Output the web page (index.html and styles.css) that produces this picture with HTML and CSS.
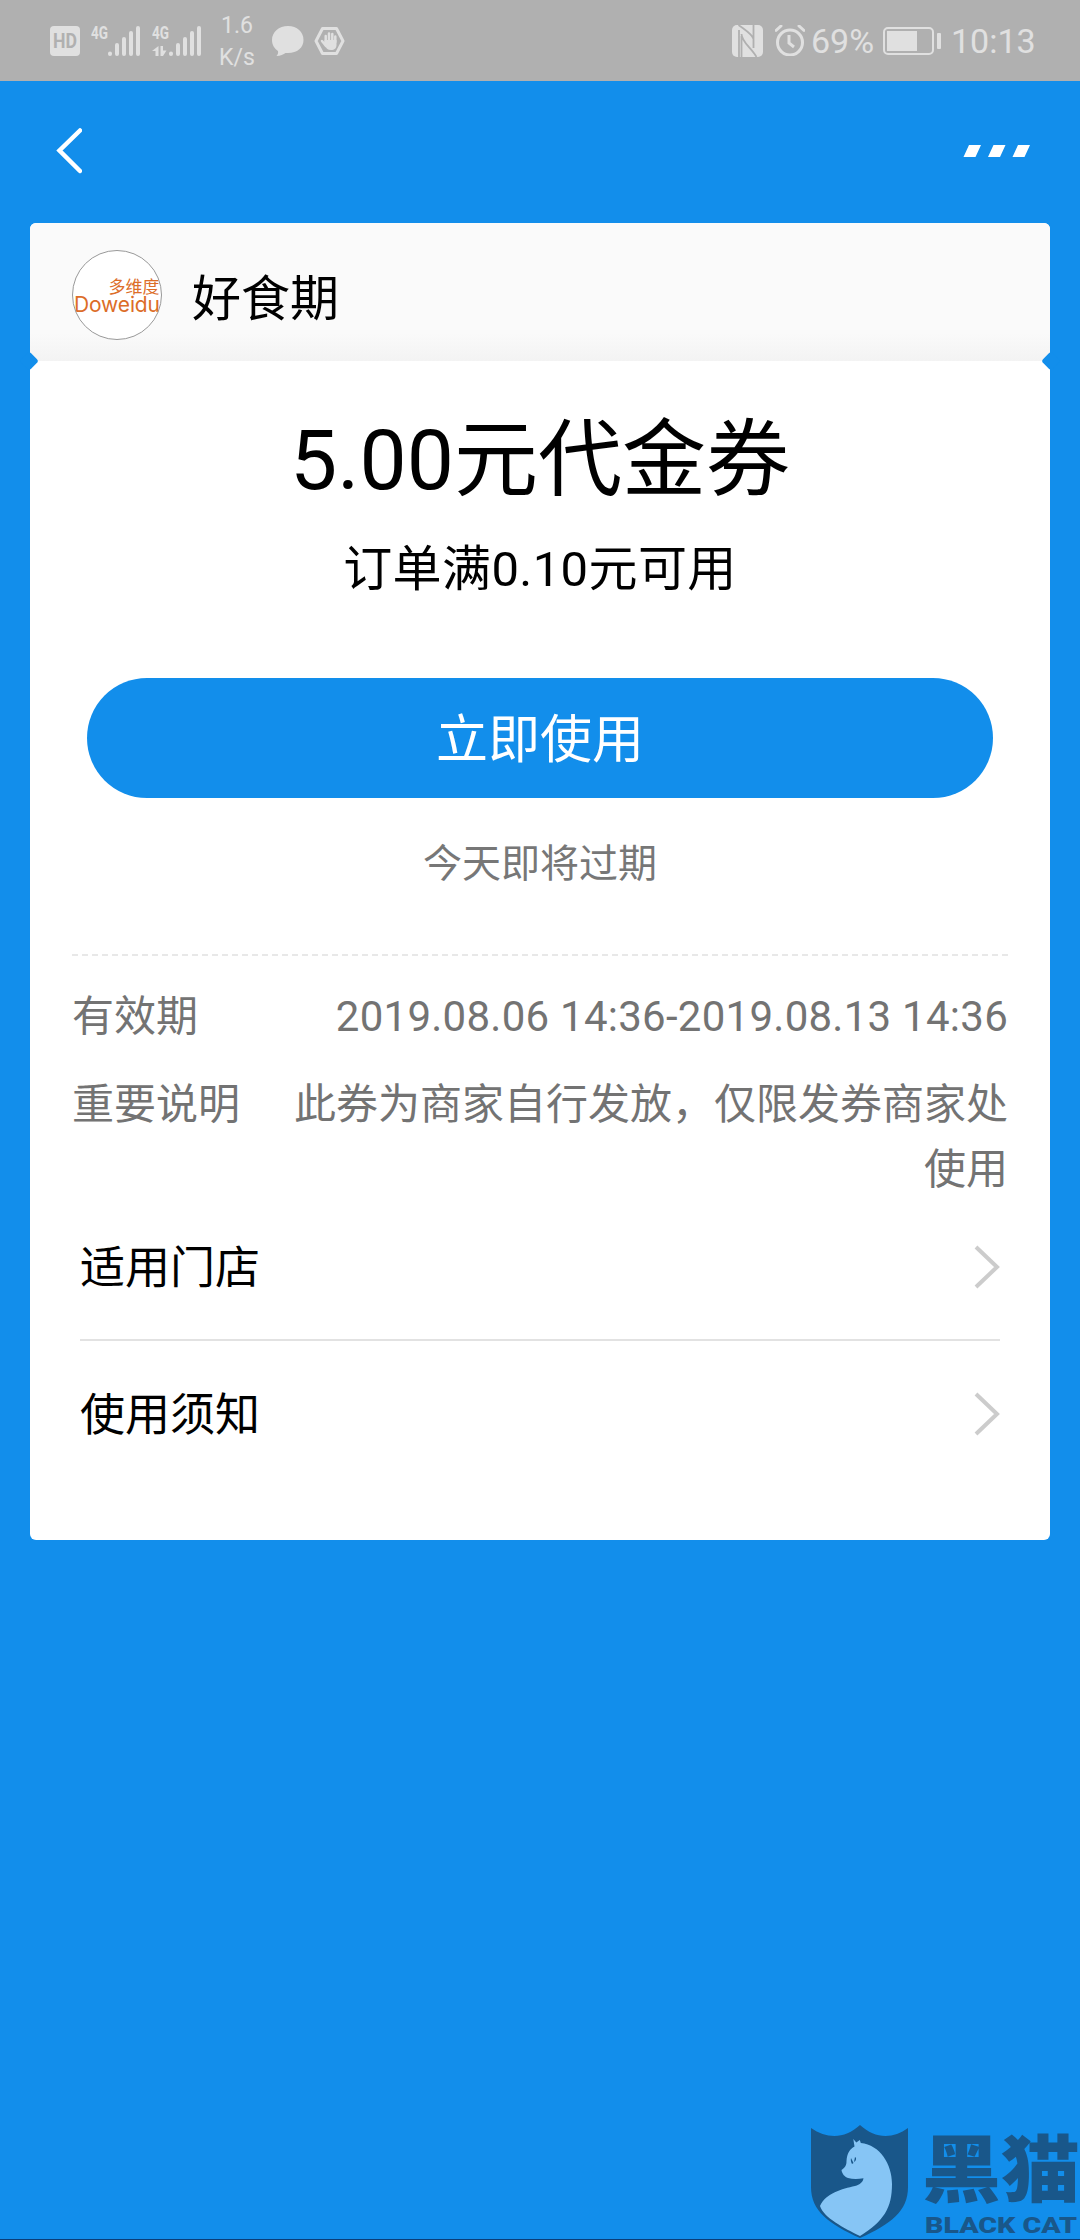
FILE: index.html
```html
<!DOCTYPE html>
<html lang="zh-CN">
<head>
    <meta charset="UTF-8">
    <meta name="viewport" content="width=device-width, initial-scale=1.0">
    <title>代金券</title>
    <link rel="stylesheet" href="styles.css">
</head>
<body>

    <div class="status-bar">
        <div class="status-left">
            <svg class="icon-hd" width="30" height="30" viewBox="0 0 30 30">
                <rect width="30" height="30" rx="4" fill="#e0e0e0"/>
                <text x="3" y="22" class="hd-text" textLength="24" lengthAdjust="spacingAndGlyphs">HD</text>
            </svg>
            <svg class="icon-signal" width="50" height="40" viewBox="0 -4 50 40">
                <text x="0" y="14" class="net-text" textLength="17" lengthAdjust="spacingAndGlyphs">4G</text>
                <path d="M19 28.500v.5M26 20v9M33 14v15M40 8v21M47 3v26" stroke="#e0e0e0" stroke-width="4" stroke-linecap="round"/>
            </svg>
            <svg class="icon-signal" width="50" height="40" viewBox="0 -4 50 40">
                <text x="0" y="14" class="net-text" textLength="17" lengthAdjust="spacingAndGlyphs">4G</text>
                <path d="M6.500 21v10H3.500v-5H0zM8.500 21h2.500v4.500h3.500L11 31H8.500z" fill="#e0e0e0"/>
                <path d="M19 28.500v.5M26 20v9M33 14v15M40 8v21M47 3v26" stroke="#e0e0e0" stroke-width="4" stroke-linecap="round"/>
            </svg>
            <div class="speed">1.6<br>K/s</div>
            <svg class="icon-msg" width="32" height="30" viewBox="0 0 32 30">
                <path d="M16 0C7 0 0 6 0 14c0 5 2.500 8.500 6 11 .5 2-.5 4-1.500 5 4 0 7-1.500 9-3 11 1 18-5 18-13S25 0 16 0z" fill="#e0e0e0"/>
            </svg>
            <svg class="icon-hand" width="31" height="28" viewBox="0 0 31 28">
                <path d="M8.500 1.500h14L29 14l-6.500 12.500h-14L2 14z" fill="none" stroke="#e0e0e0" stroke-width="3" stroke-linejoin="round"/>
                <path d="M11.700 16V9M15 14V6.500M18.300 14V7M21.300 15V9.500M8 14l4 5" stroke="#e0e0e0" stroke-width="2.500" stroke-linecap="round"/>
                <path d="M10.500 13h12v5c0 3-2 5-5.500 5-3.500 0-5-2-6.500-5z" fill="#e0e0e0"/>
            </svg>
        </div>
        <div class="status-right">
            <svg class="icon-nfc" width="31" height="32" viewBox="0 0 31 32">
                <rect width="31" height="32" rx="5" fill="#e0e0e0"/>
                <path d="M6.500 0C13 5 20 9 21.500 14v9M21.500 0v14M9.500 32V11M9.500 9c0 8 10 14 15 23M7 5v27" fill="none" stroke="#b0b0b0" stroke-width="1.800"/>
            </svg>
            <svg class="icon-alarm" width="30" height="31" viewBox="0 0 30 31">
                <circle cx="15" cy="17.500" r="12.500" fill="none" stroke="#e0e0e0" stroke-width="3"/>
                <path d="M1 5.500L6 1M29 5.500L24 1" stroke="#e0e0e0" stroke-width="3" stroke-linecap="round"/>
                <path d="M14 10v8l5 4" fill="none" stroke="#e0e0e0" stroke-width="3"/>
            </svg>
            <span class="percent">69%</span>
            <svg class="icon-battery" width="58" height="28" viewBox="0 0 58 28">
                <rect x="1" y="1" width="49" height="26" rx="4" fill="none" stroke="#e0e0e0" stroke-width="2"/>
                <rect x="4" y="4" width="30" height="20" fill="#e0e0e0"/>
                <rect x="54" y="6" width="4" height="16" rx="1" fill="#e0e0e0"/>
            </svg>
            <span class="time">10:13</span>
        </div>
    </div>

    <div class="nav">
        <svg width="26" height="46" viewBox="0 0 26 46">
            <path d="M24 2.500L3.500 22.500 24 43" fill="none" stroke="#fff" stroke-width="4.500" stroke-linecap="round"/>
        </svg>
        <svg width="68" height="12" viewBox="0 0 68 12">
            <path d="M6 0h12l-5.500 12h-12zM30.500 0h12L37 12H25zM55 0h12l-5.500 12h-12z" fill="#fff"/>
        </svg>
    </div>

    <div class="card">
        <div class="card-head">
            <div class="logo">
                <svg width="88" height="88" viewBox="0 0 88 88">
                    <text x="35.500" y="42" class="logo-cn" textLength="51">多维度</text>
                    <text x="1" y="60.500" class="logo-en" textLength="86">Doweidu</text>
                </svg>
            </div>
            <div class="shop-name">好食期</div>
        </div>

        <div class="card-body">
            <h1>5.00元代金券</h1>
            <p class="condition">订单满0.10元可用</p>
            <button class="use-btn">立即使用</button>
            <p class="expire">今天即将过期</p>

            <svg class="dashed" width="936" height="2" viewBox="0 0 936 2">
                <path d="M0 1h936" stroke="#e8e8e8" stroke-width="2" stroke-dasharray="6 4"/>
            </svg>

            <div class="info-row">
                <span class="label">有效期</span>
                <span class="value date">2019.08.06 14:36-2019.08.13 14:36</span>
            </div>
            <div class="info-row">
                <span class="label">重要说明</span>
                <span class="value">此券为商家自行发放，仅限发券商家处使用</span>
            </div>

            <div class="links">
                <div class="link-row">
                    <span>适用门店</span>
                    <svg width="26" height="44" viewBox="0 0 26 44">
                        <path d="M2 2l21 20L2 42" fill="none" stroke="#ccc" stroke-width="4"/>
                    </svg>
                </div>
                <div class="link-row">
                    <span>使用须知</span>
                    <svg width="26" height="44" viewBox="0 0 26 44">
                        <path d="M2 2l21 20L2 42" fill="none" stroke="#ccc" stroke-width="4"/>
                    </svg>
                </div>
            </div>
        </div>
    </div>

    <div class="watermark">
        <svg width="270" height="115" viewBox="0 0 270 115">
            <path d="M1 4c16 11 34 11 49-3 15 14 33 14 48 3v59c0 24-17 37-48 51C19 100 1 87 1 63z" fill="#19578a"/>
            <path d="M43.300 15l3 3.500 3.500-2.500 1 3C70 21 82 40 82 60c0 24-8 37-32 52C34 104 14 94 10 82c6-13 22-17 35-20 5-1 8-4 8.500-7.700-6 1-11 1-15.500-.300C35 53 32 50 31.500 46c4-3 5-5 5-9C37 29 40 25 44.500 22.500z" fill="#86c5f5"/>
            <path d="M41 34l2.500 5-1.500 1c-1-2-1.500-4-1-6zM45 33c2 1 1 4-1 5z" fill="#19578a"/>
            <text x="112" y="72" class="wm-cn" textLength="158" lengthAdjust="spacingAndGlyphs">黑猫</text>
            <text x="115" y="108.500" class="wm-en" textLength="152" lengthAdjust="spacingAndGlyphs">BLACK CAT</text>
        </svg>
    </div>

</body>
</html>
```

FILE: styles.css
```css
* {
    box-sizing: border-box;
}

body {
    position: relative;
    width: 1080px;
    height: 2240px;
    margin: 0;
    overflow: hidden;
    background-color: #128eeb;
    border-bottom: 1px solid #0b3d78;
    font-family: Roboto, "Noto Sans CJK SC", sans-serif;
    color: #000;
}

svg {
    display: block;
    flex-shrink: 0;
}

h1, p {
    margin: 0;
    font-weight: normal;
}

/* status bar */
.status-bar {
    display: flex;
    justify-content: space-between;
    height: 81px;
    padding: 0 45px 0 50px;
    background-color: #b0b0b0;
    color: #e0e0e0;
}

.status-left,
.status-right {
    display: flex;
    align-items: center;
}

.icon-signal {
    margin-left: 11px;
}

.hd-text {
    font: bold 20px Roboto, sans-serif;
    fill: #b0b0b0;
}

.net-text {
    font: bold 18px Roboto, sans-serif;
    fill: #e0e0e0;
}

.speed {
    width: 36px;
    margin-left: 17px;
    padding-top: 2px;
    font-size: 23px;
    line-height: 32px;
    text-align: center;
}

.icon-msg {
    margin-left: 17px;
}

.icon-hand {
    margin-left: 10px;
}

.icon-alarm {
    margin-left: 12px;
}

.percent,
.time {
    font-size: 34px;
    line-height: 80px;
}

.percent {
    width: 70px;
    margin-left: 6px;
}

.icon-battery {
    margin-left: 2px;
}

.time {
    width: 84px;
    margin-left: 10px;
}

/* nav */
.nav {
    display: flex;
    align-items: center;
    justify-content: space-between;
    height: 142px;
    padding: 0 49px 2px 56px;
}

/* card */
.card {
    width: 1020px;
    height: 1317px;
    margin: 0 auto;
    border-radius: 6px;
    background-color: #fff;
}

.card-head {
    position: relative;
    display: flex;
    align-items: center;
    height: 138px;
    padding: 6px 42px 0;
    border-radius: 6px 6px 0 0;
    background: linear-gradient(#fafafa 80%, #f3f3f3);
}

/* side notches between head and body */
.card-head::before,
.card-head::after {
    content: "";
    position: absolute;
    bottom: -7px;
    width: 14px;
    height: 14px;
    border-radius: 3px;
    background-color: #128eeb;
    transform: rotate(45deg);
}

.card-head::before {
    left: -8px;
}

.card-head::after {
    right: -8px;
}

.logo {
    width: 90px;
    height: 90px;
    border: 1px solid #999;
    border-radius: 50%;
    background-color: #fff;
    overflow: hidden;
}

.logo-cn {
    font: 17px "Noto Sans CJK SC", sans-serif;
    fill: #dc6d28;
}

.logo-en {
    font: 21px Inter, sans-serif;
    fill: #dc6d28;
}

.shop-name {
    margin-left: 30px;
    padding-top: 9px;
    font-size: 49px;
    line-height: 60px;
}

.card-body {
    padding: 40px 42px 0;
}

h1 {
    font-size: 84px;
    line-height: 120px;
    text-align: center;
}

.condition {
    margin-top: 14px;
    font-size: 49px;
    line-height: 70px;
    letter-spacing: 0.4px;
    text-align: center;
}

.use-btn {
    display: block;
    width: 906px;
    height: 120px;
    margin: 73px auto 0;
    padding: 6px 0 0;
    border: none;
    border-radius: 60px;
    background-color: #128eeb;
    color: #fff;
    font-family: inherit;
    font-size: 52px;
    line-height: 114px;
}

.expire {
    margin-top: 36px;
    font-size: 39px;
    line-height: 60px;
    text-align: center;
    color: #777;
}

.dashed {
    margin: 60px 0 28px;
}

.info-row {
    display: flex;
    justify-content: space-between;
    margin-bottom: 23px;
    font-size: 42px;
    line-height: 65px;
    color: #737373;
}

.value {
    width: 720px;
    text-align: right;
}

.date {
    letter-spacing: 0.26px;
}

.links {
    margin: -32px 8px 0;
}

.link-row {
    display: flex;
    align-items: center;
    justify-content: space-between;
    height: 146px;
    font-size: 45px;
    line-height: 60px;
}

.link-row span {
    padding-top: 6px;
}

.link-row svg {
    margin-top: 2px;
}

.link-row + .link-row {
    border-top: 2px solid #e2e2e2;
}

/* corner watermark */
.watermark {
    position: absolute;
    right: 0;
    bottom: 0;
}

.wm-cn {
    font: 900 73px "Noto Sans CJK SC", sans-serif;
    fill: #19578a;
}

.wm-en {
    font: 900 22px Roboto, sans-serif;
    fill: #19578a;
}
```
